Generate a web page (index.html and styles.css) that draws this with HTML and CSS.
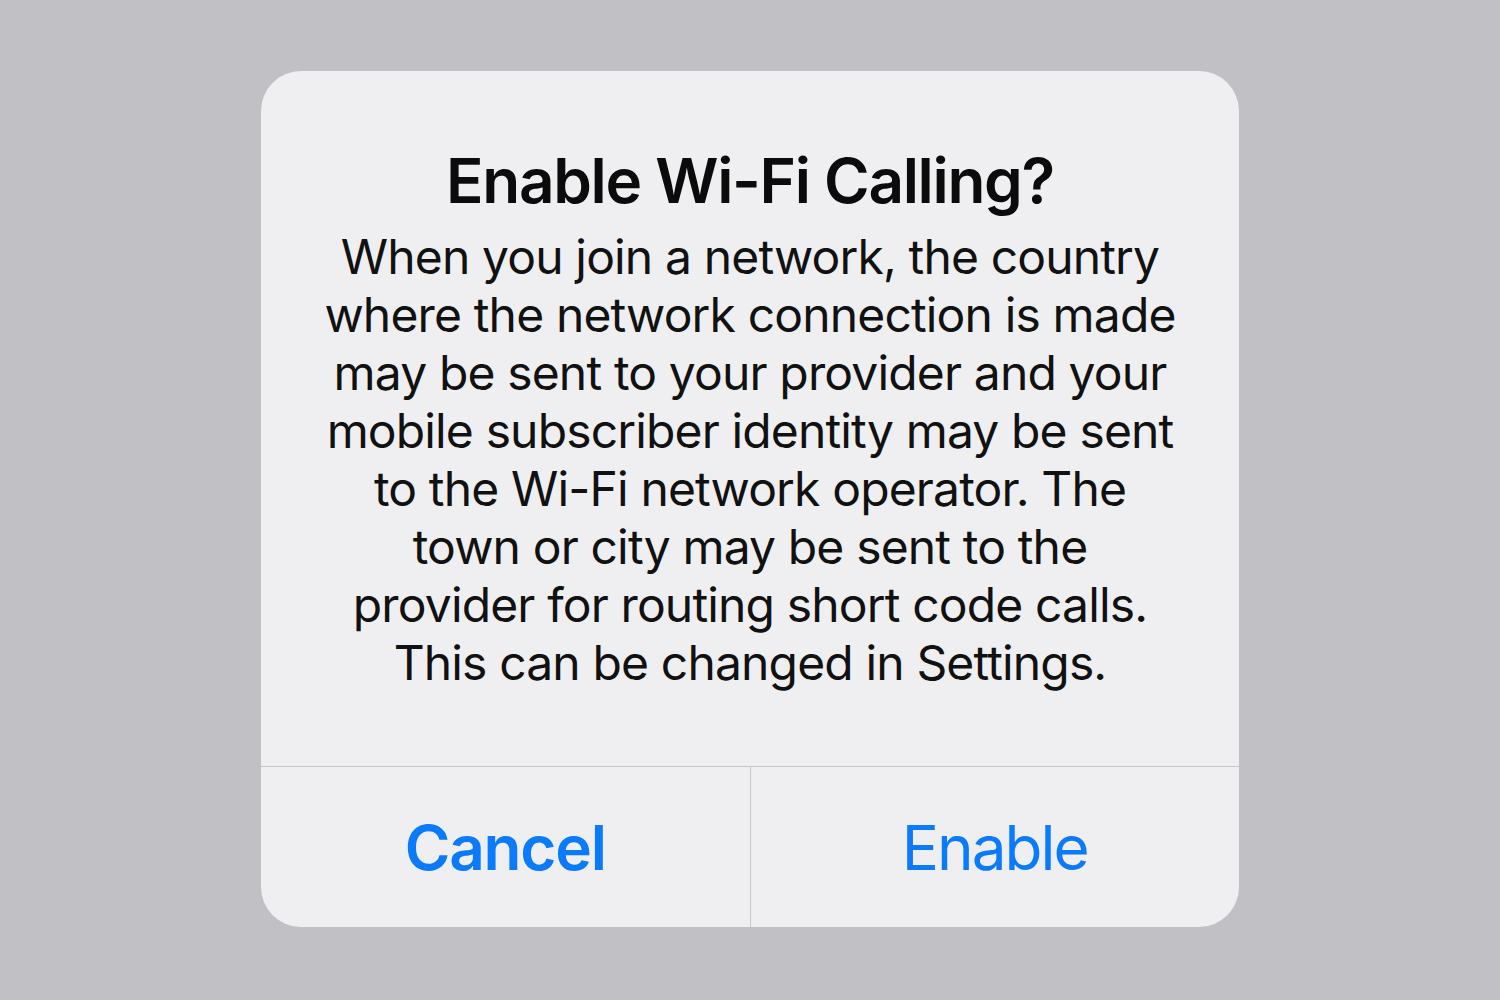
FILE: index.html
```html
<!DOCTYPE html>
<html lang="en">
<head>
<meta charset="utf-8">
<title>Enable Wi-Fi Calling?</title>
<link rel="stylesheet" href="styles.css">
</head>
<body>
<div class="alert" role="alertdialog">
  <div class="alert-content">
    <h1 class="alert-title">Enable Wi-Fi Calling?</h1>
    <p class="alert-message">When you join a network, the country<br>where the network connection is made<br>may be sent to your provider and your<br>mobile subscriber identity may be sent<br>to the Wi-Fi network operator. The<br>town or city may be sent to the<br>provider for routing short code calls.<br>This can be changed in Settings.</p>
  </div>
  <div class="alert-actions">
    <button class="alert-btn alert-btn-cancel">Cancel</button>
    <button class="alert-btn alert-btn-default">Enable</button>
  </div>
</div>
</body>
</html>
```
FILE: styles.css
```css
html, body {
  margin: 0;
  padding: 0;
}
body {
  width: 1500px;
  height: 1000px;
  background: #c1c0c5;
  display: flex;
  justify-content: center;
  align-items: flex-start;
  padding-top: 71px;
  box-sizing: border-box;
  font-family: Inter, "Liberation Sans", sans-serif;
}
.alert {
  width: 978px;
  height: 856px;
  background: #efeff1;
  border-radius: 40px;
  display: flex;
  flex-direction: column;
  overflow: hidden;
}
.alert-content {
  height: 696px;
  box-sizing: border-box;
  padding-top: 72px;
  text-align: center;
  border-bottom: 1px solid #c6c6ca;
}
.alert-title {
  margin: 0;
  font-size: 62px;
  line-height: 75px;
  font-weight: 600;
  color: #0b0b0b;
  letter-spacing: -1.3px;
}
.alert-message {
  margin: 10px 0 0;
  font-size: 48px;
  line-height: 58px;
  font-weight: 400;
  color: #111;
  letter-spacing: -0.85px;
}
.alert-actions {
  flex: 1;
  display: flex;
}
.alert-btn {
  flex: 1;
  border: 0;
  background: transparent;
  font-family: inherit;
  font-size: 62px;
  color: #0a7aff;
  padding: 0;
  display: flex;
  align-items: center;
  justify-content: center;
}
.alert-btn-cancel {
  font-weight: 600;
  letter-spacing: -1.2px;
  border-right: 1px solid #c6c6ca;
}
.alert-btn-default {
  font-weight: 400;
  letter-spacing: -2px;
}
```
